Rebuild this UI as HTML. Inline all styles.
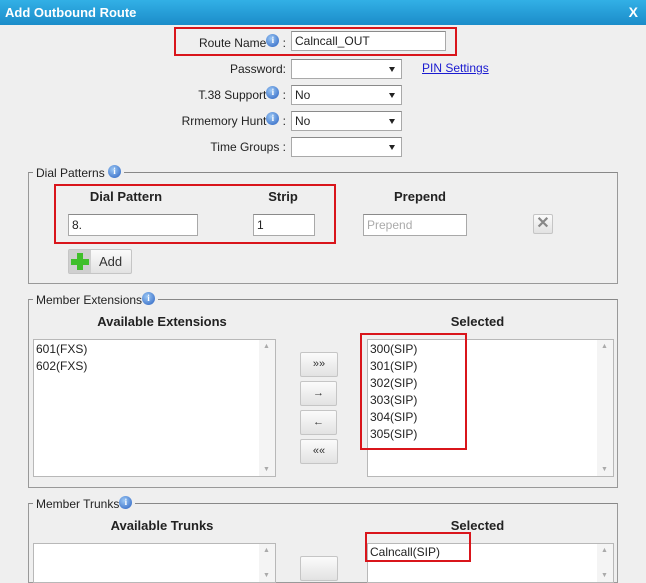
<!DOCTYPE html>
<html><head><meta charset="utf-8"><style>
*{box-sizing:border-box;margin:0;padding:0}
body{width:646px;height:567px;overflow:hidden;background:#efefef;font-family:"Liberation Sans",Arial,sans-serif;font-size:12px;color:#222;position:relative}
.a{position:absolute}
.title{left:0;top:0;width:646px;height:25px;background:linear-gradient(#32b0e6,#1b8cc9);color:#fff;font-weight:bold;font-size:13px;line-height:25px;padding-left:5px}
.x{right:8px;top:0;color:#fff;font-weight:bold;font-size:14px;line-height:25px}
.red{border:2px solid #d9151b}
.lbl{text-align:right;font-size:12px;line-height:16px}
.inp{background:#fff;border:1px solid #a9a9a9;border-top-color:#8a8a8a;font-size:12px;line-height:18px;padding-left:3px}
.sel::after{content:"";position:absolute;right:6px;top:7px;border-left:3px solid transparent;border-right:3px solid transparent;border-top:5px solid #222}
.info{display:inline-block;width:13px;height:13px;border-radius:50%;background:radial-gradient(circle at 40% 35%,#9cc8f5,#2860c0);color:#fff;font-size:9px;font-weight:bold;line-height:13px;text-align:center;font-family:"Liberation Serif",serif;vertical-align:top;position:relative;top:-1px}
.fs{border:1px solid #999;border-top-color:#888}
.lg{background:#efefef;padding:0 3px;line-height:14px}
.hd{font-weight:bold;font-size:13px;text-align:center}
.list{background:#fff;border:1px solid #b8b8b8}
.list .sb{position:absolute;right:0;top:0;width:16px;height:100%;background:#f4f4f4}
.list .sb::before{content:"▲";position:absolute;top:3px;left:4px;font-size:7px;color:#aaa}
.list .sb::after{content:"▼";position:absolute;bottom:3px;left:4px;font-size:7px;color:#aaa}
.it{line-height:17px;font-size:12px;padding-left:2px}
.btn{background:linear-gradient(#fbfbfb,#e2e2e2);border:1px solid #c5c5c5;border-radius:2px;text-align:center;font-size:11px;line-height:22px;color:#333}
</style></head><body>
<div class="a title">Add Outbound Route</div>
<div class="a x">X</div>

<div class="a red" style="left:174px;top:27px;width:283px;height:29px"></div>
<div class="a lbl" style="left:150px;top:35px;width:136px">Route Name<span class="info">i</span> :</div>
<div class="a inp" style="left:291px;top:31px;width:155px;height:20px">Calncall_OUT</div>

<div class="a lbl" style="left:150px;top:61px;width:136px">Password:</div>
<div class="a inp sel" style="left:291px;top:59px;width:111px;height:20px"></div>
<a class="a" style="left:422px;top:61px;color:#1a1ad0;text-decoration:underline">PIN Settings</a>

<div class="a lbl" style="left:150px;top:87px;width:136px">T.38 Support<span class="info">i</span> :</div>
<div class="a inp sel" style="left:291px;top:85px;width:111px;height:20px">No</div>
<div class="a lbl" style="left:130px;top:113px;width:156px">Rrmemory Hunt<span class="info">i</span> :</div>
<div class="a inp sel" style="left:291px;top:111px;width:111px;height:20px">No</div>
<div class="a lbl" style="left:150px;top:139px;width:136px">Time Groups :</div>
<div class="a inp sel" style="left:291px;top:137px;width:111px;height:20px"></div>

<!-- Dial patterns -->
<div class="a fs" style="left:28px;top:172px;width:590px;height:112px"></div>
<div class="a lg" style="left:33px;top:166px">Dial Patterns <span class="info">i</span></div>
<div class="a red" style="left:54px;top:184px;width:282px;height:60px"></div>
<div class="a hd" style="left:66px;top:189px;width:120px">Dial Pattern</div>
<div class="a hd" style="left:253px;top:189px;width:60px">Strip</div>
<div class="a hd" style="left:360px;top:189px;width:120px">Prepend</div>
<div class="a inp" style="left:68px;top:214px;width:130px;height:22px;line-height:20px">8.</div>
<div class="a inp" style="left:253px;top:214px;width:62px;height:22px;line-height:20px">1</div>
<div class="a inp" style="left:363px;top:214px;width:104px;height:22px;line-height:20px;color:#aaa">Prepend</div>
<div class="a btn" style="left:533px;top:214px;width:20px;height:20px;line-height:18px;color:#888;font-weight:bold;font-size:16px">✕</div>
<div class="a btn" style="left:68px;top:249px;width:64px;height:25px;text-align:left">
 <span class="a" style="left:0;top:0;width:22px;height:23px;background:#cfcfcf"></span>
 <span class="a" style="left:8px;top:3px;width:6px;height:17px;background:#3fbf2a"></span>
 <span class="a" style="left:2px;top:9px;width:18px;height:6px;background:#3fbf2a"></span>
 <span class="a" style="left:30px;top:0;font-size:13px;line-height:24px">Add</span>
</div>

<!-- Member Extensions -->
<div class="a fs" style="left:28px;top:299px;width:590px;height:189px"></div>
<div class="a lg" style="left:33px;top:293px">Member Extensions<span class="info">i</span></div>
<div class="a hd" style="left:62px;top:314px;width:200px">Available Extensions</div>
<div class="a hd" style="left:420px;top:314px;width:115px">Selected</div>
<div class="a list" style="left:33px;top:339px;width:243px;height:138px"><div class="sb"></div>
 <div class="it" style="margin-top:1px">601(FXS)</div><div class="it">602(FXS)</div></div>
<div class="a list" style="left:367px;top:339px;width:247px;height:138px"><div class="sb"></div>
 <div class="it" style="margin-top:1px">300(SIP)</div><div class="it">301(SIP)</div><div class="it">302(SIP)</div><div class="it">303(SIP)</div><div class="it">304(SIP)</div><div class="it">305(SIP)</div></div>
<div class="a red" style="left:360px;top:333px;width:107px;height:117px"></div>
<div class="a btn" style="left:300px;top:352px;width:38px;height:25px">»»</div>
<div class="a btn" style="left:300px;top:381px;width:37px;height:25px">→</div>
<div class="a btn" style="left:300px;top:410px;width:37px;height:25px">←</div>
<div class="a btn" style="left:300px;top:439px;width:38px;height:25px">««</div>

<!-- Member Trunks -->
<div class="a fs" style="left:28px;top:503px;width:590px;height:80px"></div>
<div class="a lg" style="left:33px;top:497px">Member Trunks<span class="info">i</span></div>
<div class="a hd" style="left:62px;top:518px;width:200px">Available Trunks</div>
<div class="a hd" style="left:420px;top:518px;width:115px">Selected</div>
<div class="a list" style="left:33px;top:543px;width:243px;height:40px"><div class="sb"></div></div>
<div class="a list" style="left:367px;top:543px;width:247px;height:40px"><div class="sb"></div>
 <div class="it" style="margin-top:0px">Calncall(SIP)</div></div>
<div class="a red" style="left:365px;top:532px;width:106px;height:30px"></div>
<div class="a btn" style="left:300px;top:556px;width:38px;height:25px"></div>
</body></html>
